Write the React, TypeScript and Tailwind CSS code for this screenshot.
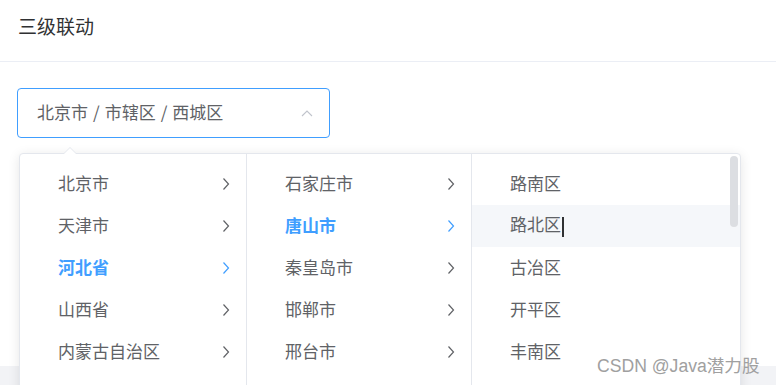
import React from 'react';

const FONT = { fontFamily: '"Noto Sans CJK SC", "Noto Sans", sans-serif' };

const provinces = ['北京市', '天津市', '河北省', '山西省', '内蒙古自治区'];
const cities = ['石家庄市', '唐山市', '秦皇岛市', '邯郸市', '邢台市'];
const districts = ['路南区', '路北区', '古冶区', '开平区', '丰南区'];

const Chevron: React.FC<{ active?: boolean }> = ({ active }) => (
  <svg width="8" height="14" viewBox="0 0 8 14" className="shrink-0">
    <polyline
      points="1.5,1.5 6.5,7 1.5,12.5"
      fill="none"
      stroke={active ? '#409eff' : '#606266'}
      strokeWidth="1.2"
    />
  </svg>
);

const Column: React.FC<{
  items: string[];
  active?: number;
  hover?: number;
  arrows?: boolean;
  width: string;
  last?: boolean;
}> = ({ items, active, hover, arrows, width, last }) => (
  <div className={`${width} shrink-0 pt-[9px] ${last ? '' : 'border-r border-[#e4e7ed]'} relative`}>
    {items.map((label, i) => (
      <div
        key={label}
        className={`h-[42px] flex items-center pl-[38px] ${arrows ? 'pr-[16px]' : ''} ${
          hover === i ? 'bg-[#f5f7fa]' : ''
        }`}
      >
        <span
          className={`flex-1 text-[17px] leading-[24px] -mt-[3px] ${
            active === i ? 'text-[#409eff] font-bold' : 'text-[#606266]'
          }`}
        >
          {label}
          {!arrows && hover === i && (
            <span className="inline-block align-middle ml-[1px] w-[1.5px] h-[20px] bg-[#303133]" />
          )}
        </span>
        {arrows && <Chevron active={active === i} />}
      </div>
    ))}
  </div>
);

const Sep = () => <span className="mx-[5px]">/</span>;

export default function App() {
  return (
    <div className="w-[776px] h-[385px] bg-[#f2f3f6] relative overflow-hidden" style={FONT}>
      <div className="h-[366px] bg-white">
        <div className="h-[62px] px-[18px] pt-[13px] border-b border-[#ebeef5]">
          <span className="text-[19px] leading-[26px] text-[#303133]">三级联动</span>
        </div>
        <div className="pt-[26px] pl-[17px]">
          <div className="w-[313px] h-[50px] border border-[#409eff] rounded-[4px] flex items-center pl-[19px] pr-[16px]">
            <span className="flex-1 text-[17px] leading-[24px] -mt-[2px] text-[#606266]">
              北京市<Sep />市辖区<Sep />西城区
            </span>
            <svg width="12" height="7" viewBox="0 0 12 7">
              <polyline points="1,6 6,1 11,6" fill="none" stroke="#c0c4cc" strokeWidth="1.1" />
            </svg>
          </div>
        </div>
      </div>

      {/* dropdown panel */}
      <div className="absolute left-[19px] top-[153px] w-[722px] h-[260px] bg-white border border-[#e4e7ed] rounded-[4px] shadow-[0_2px_12px_0_rgba(0,0,0,0.1)] flex">
        <div className="absolute -top-[7px] left-[43px] w-0 h-0 border-x-[7px] border-x-transparent border-b-[7px] border-b-[#e4e7ed]" />
        <div className="absolute -top-[6px] left-[44px] w-0 h-0 border-x-[6px] border-x-transparent border-b-[6px] border-b-white" />
        <Column items={provinces} active={2} arrows width="w-[227px]" />
        <Column items={cities} active={1} arrows width="w-[225px]" />
        <Column items={districts} hover={1} width="flex-1" last />
        <div className="absolute right-[2px] top-[2px] w-[8px] h-[71px] rounded-full bg-[#dcdee2]" />
      </div>

      <div
        className="absolute left-[597px] top-[354px] text-[17.6px] text-[#a0a0a0] leading-[24px]"
        style={{ fontFamily: '"Liberation Sans", "Noto Sans CJK SC", sans-serif' }}
      >
        CSDN @Java潜力股
      </div>
    </div>
  );
}
